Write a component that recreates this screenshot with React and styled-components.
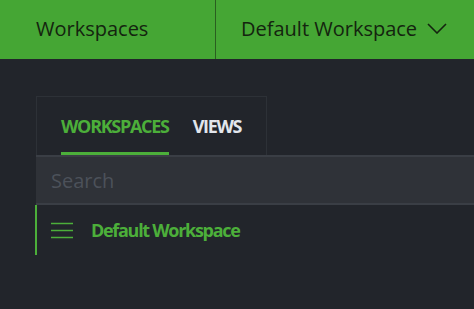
import React from 'react';
import styled, { createGlobalStyle } from 'styled-components';

const GlobalStyle = createGlobalStyle`
    html, body {
        margin: 0;
        padding: 0;
        background-color: #22252b;
        font-family: "Open Sans", "Liberation Sans", sans-serif;
        overflow: hidden;
    }
`;

const StyledHeader = styled.header`
    display: flex;
    height: 59px;
    background-color: #45a634;
`;

const StyledHeaderCell = styled.div`
    display: flex;
    align-items: center;
    gap: 10px;
    box-sizing: border-box;
    width: ${props => props.width || 'auto'};
    padding-left: ${props => props.pad}px;
    border-right: ${props => props.divider ? '1px solid #2a5e20' : 'none'};
    color: #14240f;
    font-size: 20px;
    padding-bottom: 2px;
`;

const StyledMain = styled.main`
    padding: 37px 0 0 36px;
`;

const StyledTabs = styled.div`
    display: flex;
    gap: 24px;
    width: 231px;
    height: 59px;
    box-sizing: border-box;
    padding-left: 24px;
    border: 1px solid #2d3137;
    border-bottom: none;
`;

const StyledTab = styled.div`
    display: flex;
    align-items: center;
    box-sizing: border-box;
    height: 100%;
    padding-top: 2px;
    font-size: 18px;
    font-weight: 700;
    letter-spacing: -1.3px;
    color: ${props => props.active ? '#4caf3a' : '#e2e6ec'};
    border-bottom: 3px solid ${props => props.active ? '#4caf3a' : 'transparent'};
`;

const StyledSearch = styled.input`
    display: block;
    box-sizing: border-box;
    width: calc(100% + 10px);
    height: 50px;
    margin: 0;
    padding: 0 15px;
    background-color: #2f3238;
    border: none;
    border-top: 2px solid #3a3e45;
    border-bottom: 2px solid #3a3e45;
    font-family: "Open Sans", "Liberation Sans", sans-serif;
    font-size: 20px;
    color: #e2e6ec;
    outline: none;

    &::placeholder {
        color: #4c515a;
    }
`;

const StyledItem = styled.div`
    display: flex;
    align-items: center;
    gap: 17px;
    height: 50px;
    box-sizing: border-box;
    padding-left: 14px;
    border-left: 2px solid #4caf3a;
    margin-left: -1px;
    color: #4caf3a;
    font-size: 18px;
    font-weight: 700;
    letter-spacing: -1.3px;
`;

function Chevron() {
    return (
        <svg width="20" height="11" viewBox="0 0 20 11" fill="none">
            <path d="M1 1 L10 10 L19 1" stroke="#14240f" strokeWidth="1.6" />
        </svg>
    );
}

function Burger() {
    return (
        <svg width="23" height="17" viewBox="0 0 23 17" fill="none">
            <path d="M0 1.5 H22 M0 8.5 H22 M0 15.5 H22" stroke="#4caf3a" strokeWidth="1.6" />
        </svg>
    );
}

function App() {
    return (
        <>
            <GlobalStyle />
            <StyledHeader>
                <StyledHeaderCell width="216px" pad={36} divider>Workspaces</StyledHeaderCell>
                <StyledHeaderCell pad={25}>
                    Default Workspace
                    <Chevron />
                </StyledHeaderCell>
            </StyledHeader>
            <StyledMain>
                <StyledTabs>
                    <StyledTab active>WORKSPACES</StyledTab>
                    <StyledTab>VIEWS</StyledTab>
                </StyledTabs>
                <StyledSearch placeholder="Search" />
                <StyledItem>
                    <Burger />
                    Default Workspace
                </StyledItem>
            </StyledMain>
        </>
    );
}

export default App;
